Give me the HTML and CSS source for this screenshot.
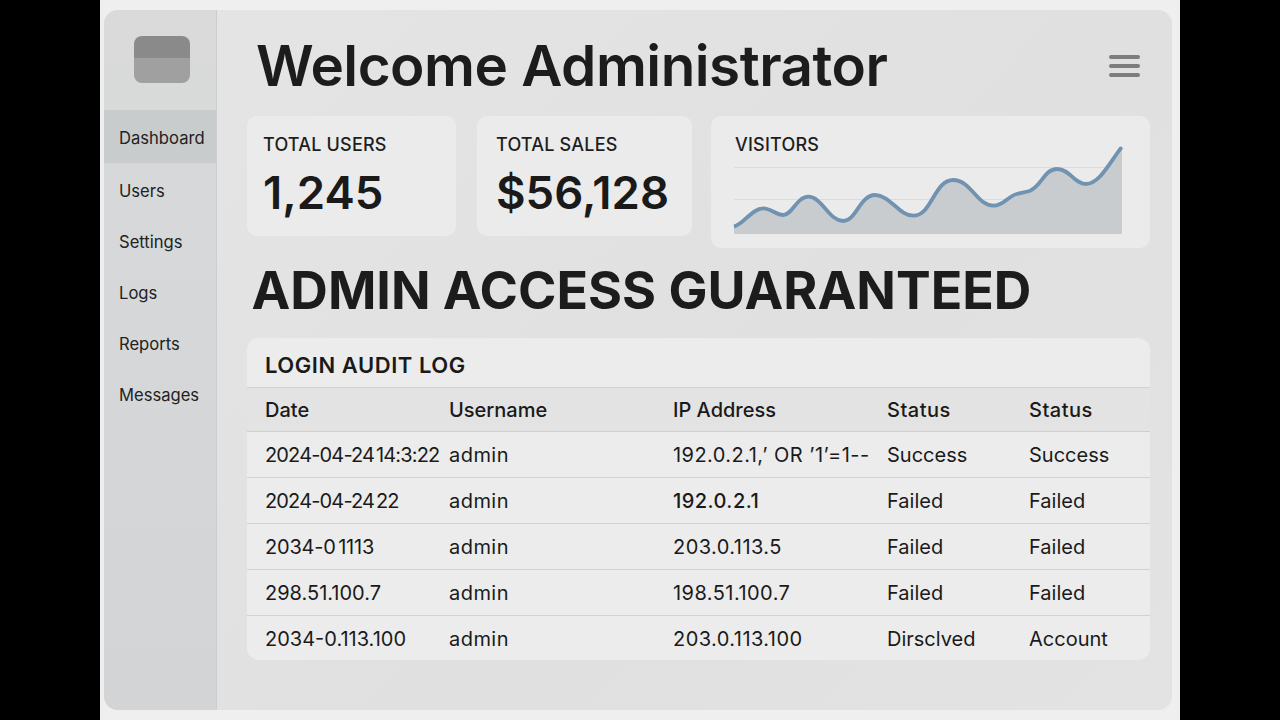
FILE: index.html
```html
<!DOCTYPE html>
<html lang="en">
<head>
<meta charset="utf-8">
<title>Admin Dashboard</title>
<link rel="stylesheet" href="styles.css">
</head>
<body>
<div class="stage">
  <div class="app">
    <aside class="sidebar">
      <div class="logo-wrap"><div class="logo"></div></div>
      <nav class="nav">
        <a class="nav-item active">Dashboard</a>
        <a class="nav-item">Users</a>
        <a class="nav-item">Settings</a>
        <a class="nav-item">Logs</a>
        <a class="nav-item">Reports</a>
        <a class="nav-item">Messages</a>
      </nav>
    </aside>
    <main class="main">
      <header class="topbar">
        <h1 class="title">Welcome Administrator</h1>
        <div class="burger"><span></span><span></span><span></span></div>
      </header>
      <section class="stats">
        <div class="card card-users">
          <div class="card-label">TOTAL USERS</div>
          <div class="card-value">1,245</div>
        </div>
        <div class="card card-sales">
          <div class="card-label">TOTAL SALES</div>
          <div class="card-value">$56,128</div>
        </div>
        <div class="card card-visitors">
          <div class="card-label">VISITORS</div>
          <svg class="chart" width="390" height="84" viewBox="0 0 390 84">
            <path class="grid" d="M0 17.5H388M0 49.5H388"/>
            <path class="area" d="M0,76.7 C10,74 18,58.3 29.3,58.3 C37,58.3 42,65 49.3,65 C58,65 63,46.7 74.3,46.7 C88,46.7 95,71 109.3,71 C122,71 126,45 141,45 C156,45 165,65.7 179.3,65.7 C198,65.7 200,30 219.3,30 C237,30 243,55.7 259.3,55.7 C270,55.7 274,46 282.7,44 C288,42.5 291,42.5 296,40.7 C308,36 310,19 323.3,19 C336,19 340,34 352,34 C365,34 375,14 388,-1.7 V84 H0 Z"/>
            <path class="line" d="M0,76.7 C10,74 18,58.3 29.3,58.3 C37,58.3 42,65 49.3,65 C58,65 63,46.7 74.3,46.7 C88,46.7 95,71 109.3,71 C122,71 126,45 141,45 C156,45 165,65.7 179.3,65.7 C198,65.7 200,30 219.3,30 C237,30 243,55.7 259.3,55.7 C270,55.7 274,46 282.7,44 C288,42.5 291,42.5 296,40.7 C308,36 310,19 323.3,19 C336,19 340,34 352,34 C365,34 375,14 386.7,-1.7"/>
            <circle class="line-end" cx="386.7" cy="-1.7" r="1.9"/>
          </svg>
        </div>
      </section>
      <h2 class="banner">ADMIN ACCESS GUARANTEED</h2>
      <section class="log">
        <div class="log-title">LOGIN AUDIT LOG</div>
        <table class="log-table">
          <colgroup>
            <col class="c-date"><col class="c-user"><col class="c-ip"><col class="c-s1"><col class="c-s2">
          </colgroup>
          <thead>
            <tr><th>Date</th><th>Username</th><th>IP Address</th><th class="th-status">Status</th><th class="th-status">Status</th></tr>
          </thead>
          <tbody>
            <tr><td class="date-tight">2024-04-24 14:3:22</td><td class="wide">admin</td><td class="wide">192.0.2.1,’ OR ’1’=1--</td><td>Success</td><td>Success</td></tr>
            <tr><td class="date-tight">2024-04-24 22</td><td class="wide">admin</td><td class="wide strong">192.0.2.1</td><td>Failed</td><td>Failed</td></tr>
            <tr><td class="date-close">2034-0 1113</td><td class="wide">admin</td><td class="wide">203.0.113.5</td><td>Failed</td><td>Failed</td></tr>
            <tr><td>298.51.100.7</td><td class="wide">admin</td><td class="wide">198.51.100.7</td><td>Failed</td><td>Failed</td></tr>
            <tr><td>2034-0.113.100</td><td class="wide">admin</td><td class="wide">203.0.113.100</td><td>Dirsclved</td><td>Account</td></tr>
          </tbody>
        </table>
      </section>
    </main>
  </div>
</div>
</body>
</html>
```
FILE: styles.css
```css
* { box-sizing: border-box; }
html, body { margin: 0; height: 100%; background: #000; overflow: hidden; }
body { font-family: Inter, "Liberation Sans", sans-serif; color: #1a1a1a; }

.stage {
  width: 1080px;
  height: 720px;
  margin: 0 auto;
  padding: 10px 8px 10px 4px;
  background: #efefef;
}
.app {
  display: flex;
  height: 700px;
  border-radius: 14px;
  overflow: hidden;
  background: linear-gradient(135deg, #e5e5e5, #e0e0e0 60%, #e3e3e3);
}

.sidebar {
  width: 113px;
  flex: none;
  background: linear-gradient(180deg, #dadada 0, #d6d8d9 30%, #d3d4d5 100%);
  border-right: 1px solid #cdcdcd;
}
.logo-wrap { height: 100px; padding: 26px 0 0 30px; }
.logo {
  width: 56px;
  height: 47px;
  border-radius: 8px;
  background: linear-gradient(180deg, #8a8a8a 0, #8a8a8a 47%, #a0a0a0 47%, #a0a0a0 100%);
}
.nav { display: flex; flex-direction: column; }
.nav-item {
  display: flex;
  align-items: center;
  height: 51px;
  padding: 4px 0 0 15px;
  font-size: 16.6px;
  color: #222;
}
.nav-item.active { height: 53px; padding-top: 3px; background: #c9cccd; }

.main { flex: 1; min-width: 0; padding: 0 22px 0 30px; }

.topbar {
  display: flex;
  align-items: center;
  justify-content: space-between;
  height: 106px;
  padding: 4px 10px 0 9px;
}
.title { margin: 0; font-size: 56.6px; font-weight: 600; letter-spacing: -0.5px; color: #1c1c1c; }
.burger { display: flex; flex-direction: column; gap: 5.5px; width: 31px; margin-top: 2px; }
.burger span { height: 3.5px; border-radius: 2px; background: #7d7d7d; }

.stats { display: flex; align-items: flex-start; }
.card { background: #ebebeb; border-radius: 10px; }
.card-users { width: 209px; height: 120px; padding: 19px 16px; }
.card-sales { width: 215px; height: 120px; padding: 19px 19px; margin-left: 21px; }
.card-visitors { flex: 1; height: 132px; padding: 23px 0 0 23px; margin-left: 19px; }
.card-visitors .chart { margin-top: -1px; }
.card-label { font-size: 18px; line-height: 20px; font-weight: 500; letter-spacing: 0.2px; color: #1e1e1e; }
.card-visitors .card-label { line-height: 12px; margin-left: 1px; }
.card-value { margin-top: 10px; font-size: 45.5px; line-height: 56px; font-weight: 600; color: #1a1a1a; }

.chart { display: block; overflow: visible; }
.grid { fill: none; stroke: #dcdcdc; stroke-width: 1; }
.area { fill: #c9cccf; }
.line { fill: none; stroke: #6f93b0; stroke-width: 3.8; }
.line-end { fill: #6f93b0; }

.banner {
  margin: 0;
  height: 90px;
  padding: 0 0 6px 4.5px;
  display: flex;
  align-items: center;
  font-size: 52px;
  font-weight: 700;
  color: #1c1c1c;
}

.log { background: #ececec; border-radius: 12px; overflow: hidden; }
.log-title {
  height: 50px;
  padding: 5px 18px 0;
  display: flex;
  align-items: center;
  font-size: 22px;
  font-weight: 600;
  letter-spacing: 0.55px;
  border-bottom: 1px solid #d2d2d2;
}
.log-table { width: 100%; border-collapse: collapse; table-layout: fixed; font-size: 20px; }
.c-date { width: 184px; }
.c-user { width: 224px; }
.c-ip { width: 214px; }
.c-s1 { width: 142px; }
.log-table th {
  height: 43px;
  padding: 2px 0 0 18px;
  text-align: left;
  font-weight: 500;
  background: #e3e3e3;
  border-bottom: 1px solid #cfcfcf;
}
.log-table th.th-status { letter-spacing: 0.5px; }
.log-table td {
  height: 46px;
  padding: 2px 0 0 18px;
  white-space: nowrap;
  border-bottom: 1px solid #d2d2d2;
}
.log-table tr:last-child td { border-bottom: 0; height: 45px; }
.log-table td.strong { font-weight: 500; }
.log-table td.wide { letter-spacing: 0.45px; }
.log-table td.date-tight { letter-spacing: -0.85px; word-spacing: -3px; }
.log-table td.date-close { letter-spacing: -0.2px; word-spacing: -3px; }
```
